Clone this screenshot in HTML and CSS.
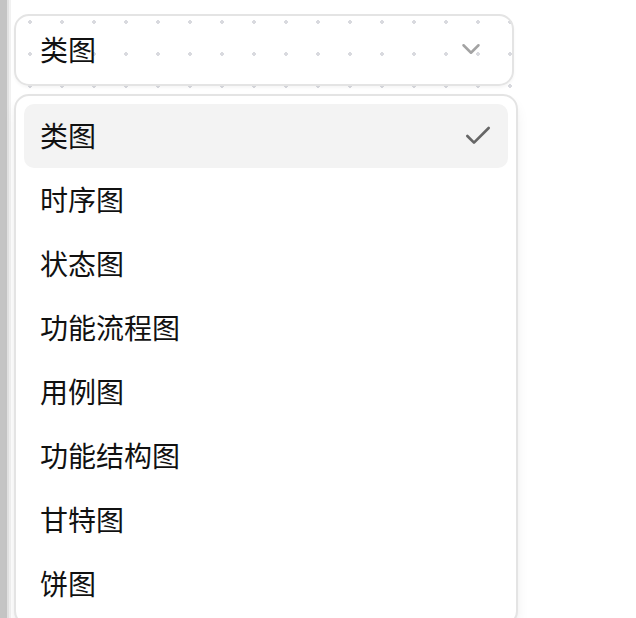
FILE: index.html
```html
<!DOCTYPE html>
<html lang="zh-CN">
<head>
<meta charset="utf-8">
<title>Select</title>
<link rel="stylesheet" href="styles.css">
</head>
<body>
<div class="page">
  <div class="rail"></div>
  <main class="canvas">
    <div class="field">
      <button class="trigger" type="button">
        <span class="trigger-value">类图</span>
        <svg class="chevron" viewBox="0 0 24 24" width="30" height="30" fill="none" stroke="currentColor" stroke-width="2" stroke-linecap="round" stroke-linejoin="round"><path d="m6 9 6 6 6-6"/></svg>
      </button>
      <ul class="menu">
        <li class="option selected">
          <span>类图</span>
          <svg class="check" viewBox="0 0 24 24" width="32" height="32" fill="none" stroke="currentColor" stroke-width="2" stroke-linecap="round" stroke-linejoin="round"><path d="M20 6 9 17l-5-5"/></svg>
        </li>
        <li class="option"><span>时序图</span></li>
        <li class="option"><span>状态图</span></li>
        <li class="option"><span>功能流程图</span></li>
        <li class="option"><span>用例图</span></li>
        <li class="option"><span>功能结构图</span></li>
        <li class="option"><span>甘特图</span></li>
        <li class="option"><span>饼图</span></li>
      </ul>
    </div>
  </main>
</div>
</body>
</html>
```
FILE: styles.css
```css
* { box-sizing: border-box; }

html, body {
  margin: 0;
  padding: 0;
  background: #ffffff;
  height: 100%;
  overflow: hidden;
}

body {
  font-family: "Noto Sans CJK SC", "Noto Sans", sans-serif;
  color: #111111;
}

.page {
  display: flex;
  height: 618px;
}

.rail {
  width: 11px;
  flex: none;
  background: linear-gradient(to right, #c4c4c4 0, #c4c4c4 7px, #e2e2e2 7px, #e2e2e2 9px, #f1f1f1 9px, #f1f1f1 11px);
}

.canvas {
  width: 520px;
  flex: none;
  padding: 14px 0 0 3px;
  background-image: radial-gradient(circle, #d9dadf 1.8px, transparent 2px);
  background-size: 32px 32px;
  background-position: 3px 6px;
}

.field {
  position: relative;
  width: 500px;
}

.trigger {
  display: flex;
  align-items: center;
  justify-content: space-between;
  width: 500px;
  height: 72px;
  padding: 0 26px 2px 24px;
  border: 2px solid #e4e4e4;
  border-radius: 15px;
  background: transparent;
  box-shadow: 0 2px 3px rgba(0, 0, 0, 0.04);
  font: inherit;
  font-size: 28px;
  color: #111111;
  cursor: pointer;
}

.trigger-value {
  line-height: 1;
}

.chevron {
  color: #a3a3a3;
  flex: none;
}

.menu {
  position: absolute;
  top: 80px;
  left: 0;
  width: 504px;
  margin: 0;
  padding: 8px;
  list-style: none;
  background: #ffffff;
  border: 2px solid #e4e4e4;
  border-radius: 15px;
  box-shadow: 0 8px 14px -2px rgba(0, 0, 0, 0.08), 0 3px 6px -3px rgba(0, 0, 0, 0.08);
}

.option {
  display: flex;
  align-items: center;
  justify-content: space-between;
  height: 64px;
  padding: 0 14px 2px 16px;
  border-radius: 10px;
  font-size: 28px;
  line-height: 1;
}

.option .check {
  margin-top: 2px;
}

.option.selected {
  background: #f3f3f3;
}

.check {
  color: #666666;
  flex: none;
}
```
